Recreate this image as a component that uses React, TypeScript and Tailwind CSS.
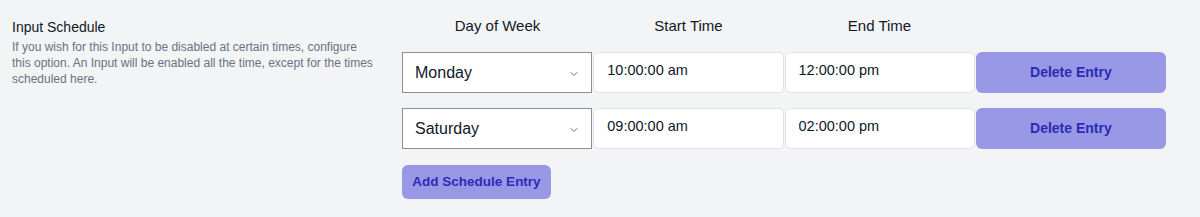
import { ChevronDown } from 'lucide-react';

const entries = [
  { day: 'Monday', start: '10:00:00 am', end: '12:00:00 pm' },
  { day: 'Saturday', start: '09:00:00 am', end: '02:00:00 pm' },
];

function DaySelect({ value }: { value: string }) {
  return (
    <div className="relative h-[41px] bg-white border border-[#8f8f8f] flex items-center pl-3 text-[16px] text-gray-900">
      {value}
      <ChevronDown className="absolute right-[11px] top-[15px] w-[12px] h-[12px] text-gray-500" strokeWidth={2} />
    </div>
  );
}

function TimeInput({ value }: { value: string }) {
  return (
    <input
      readOnly
      value={value}
      className="h-[41px] w-full bg-white border border-[#e3e3e6] rounded-[5px] pl-[13px] pb-[6px] text-[14.5px] text-gray-900 outline-none"
    />
  );
}

export default function App() {
  return (
    <div
      className="w-[1200px] h-[217px] bg-[#f3f4f6] flex"
      style={{ fontFamily: '"Liberation Sans", Arial, sans-serif' }}
    >
      <div className="w-[390px] pl-3 pt-[17px] pr-4">
        <h3 className="text-[14px] leading-5 font-medium text-gray-900">Input Schedule</h3>
        <p className="mt-[2px] text-[12px] leading-4 text-gray-500">
          If you wish for this Input to be disabled at certain times, configure this option. An Input will be
          enabled all the time, except for the times scheduled here.
        </p>
      </div>

      <div className="ml-3 w-[764px] pt-4">
        <div className="grid grid-cols-4 text-center text-[15px] leading-5 text-gray-900">
          <div>Day of Week</div>
          <div>Start Time</div>
          <div>End Time</div>
          <div />
        </div>

        <div className="mt-4 flex flex-col gap-[15px]">
          {entries.map((e) => (
            <div key={e.day} className="grid grid-cols-4 gap-px">
              <DaySelect value={e.day} />
              <TimeInput value={e.start} />
              <TimeInput value={e.end} />
              <button className="h-[41px] rounded-md bg-[#9898e7] text-[14px] font-bold text-[#2b2bb5]">
                Delete Entry
              </button>
            </div>
          ))}
        </div>

        <button className="mt-4 h-[34px] w-[149px] rounded-md bg-[#9898e7] text-[13.5px] font-bold text-[#2b2bb5]">
          Add Schedule Entry
        </button>
      </div>
    </div>
  );
}
